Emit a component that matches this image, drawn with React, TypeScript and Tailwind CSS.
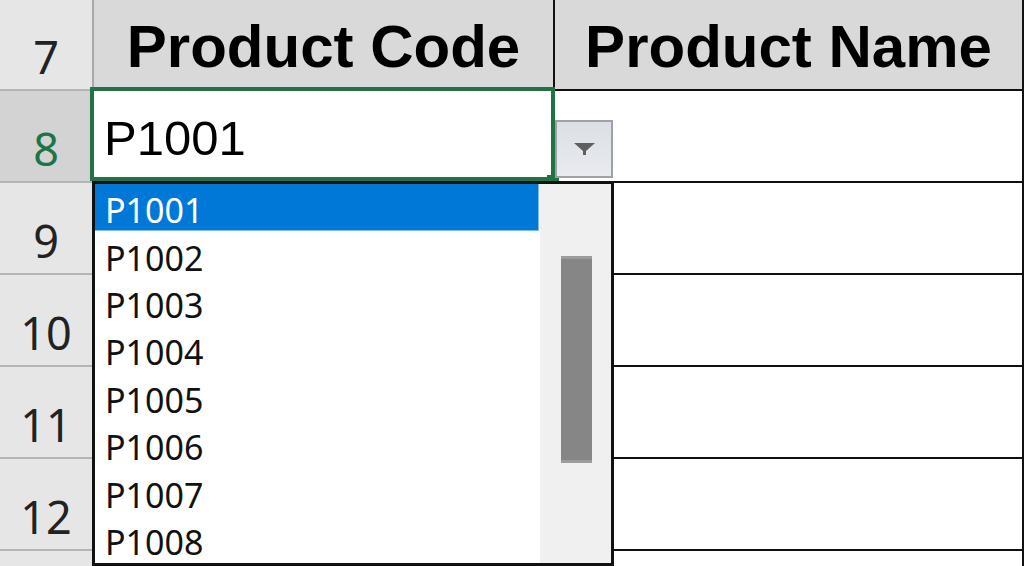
import React from "react";

const ROWS = [8, 9, 10, 11, 12, 13];
const CODES = ["P1001", "P1002", "P1003", "P1004", "P1005", "P1006", "P1007", "P1008"];

function RowHead({ n, active, hideLabel }: { n: number; active?: boolean; hideLabel?: boolean }) {
  return (
    <div
      className={`h-[92px] flex items-end justify-center pb-[10px] border-r-2 border-b-2 border-r-[#a8a8a8] border-b-[#b4b4b4] ${
        active ? "bg-[#d3d3d3] text-[#217346]" : "bg-[#e6e6e6] text-[#222]"
      }`}
    >
      {!hideLabel && <span className="font-['Noto_Sans',sans-serif] text-[45px] leading-none">{n}</span>}
    </div>
  );
}

export default function App() {
  return (
    <div className="relative w-[1024px] h-[566px] overflow-hidden bg-white font-['Liberation_Sans',Arial,sans-serif]">
      <div className="grid grid-cols-[94px_461px_469px]">
        {/* header row */}
        <div className="h-[91px] flex items-end justify-center pb-[10px] bg-[#e6e6e6] border-r-2 border-b-2 border-r-[#a8a8a8] border-b-[#b4b4b4] text-[#222]">
          <span className="font-['Noto_Sans',sans-serif] text-[45px] leading-none">7</span>
        </div>
        <div className="h-[91px] flex items-center justify-center pt-[5px] bg-[#d9d9d9] border-r-2 border-b-2 border-[#111]">
          <span className="text-[60px] font-bold leading-none text-black">Product Code</span>
        </div>
        <div className="h-[91px] flex items-center justify-center pt-[5px] bg-[#d9d9d9] border-r-2 border-b-2 border-[#111]">
          <span className="text-[60px] font-bold leading-none text-black">Product Name</span>
        </div>

        {ROWS.map((n) => (
          <React.Fragment key={n}>
            <RowHead n={n} active={n === 8} hideLabel={n === 13} />
            <div className="relative h-[92px] flex items-center pl-[10px] pt-[5px] border-r-2 border-b-2 border-[#111] bg-white">
              {n === 8 && (
                <>
                  <span className="text-[49px] leading-none text-black">P1001</span>
                  {/* selection frame */}
                  <div className="absolute -left-[4px] -top-[4px] -right-[2px] bottom-0 border-4 border-[#217346]" />
                </>
              )}
            </div>
            <div className="h-[92px] border-r-2 border-b-2 border-[#111] bg-white" />
          </React.Fragment>
        ))}
      </div>

      {/* fill handle */}
      <div className="absolute left-[547px] top-[175px] w-[12px] h-[12px] bg-[#217346]" />

      {/* dropdown arrow button */}
      <div className="absolute left-[555px] top-[120px] w-[58px] h-[58px] border-2 border-[#9ea1a6] bg-gradient-to-b from-[#dcdfe5] to-[#e9ebef] flex items-center justify-center">
        <svg width="21" height="12" viewBox="0 0 21 12">
          <polygon points="0,0 21,0 12,8 12,12 9,12 9,8" fill="#5f5f5f" />
        </svg>
      </div>

      {/* dropdown list */}
      <div className="absolute left-[92px] top-[181px] w-[522px] h-[385px] border-[3px] border-[#111] bg-white flex">
        <div className="w-[445px] flex flex-col">
          {CODES.map((c, i) => (
            <div
              key={c}
              className={`h-[47.4px] shrink-0 flex items-center pl-[10px] pt-[5px] font-['Noto_Sans',sans-serif] text-[34px] leading-none ${
                i === 0 ? "bg-[#0078d7] text-white border-b border-r border-[#7db9ea] mr-[1px]" : "text-[#111]"
              }`}
            >
              {c}
            </div>
          ))}
        </div>
        <div className="flex-1 bg-[#f0f0f0] pt-[72px] pl-[21px]">
          <div className="w-[31px] h-[207px] bg-[#868686] border-y-[3px] border-[#9c9c9c]" />
        </div>
      </div>
    </div>
  );
}
